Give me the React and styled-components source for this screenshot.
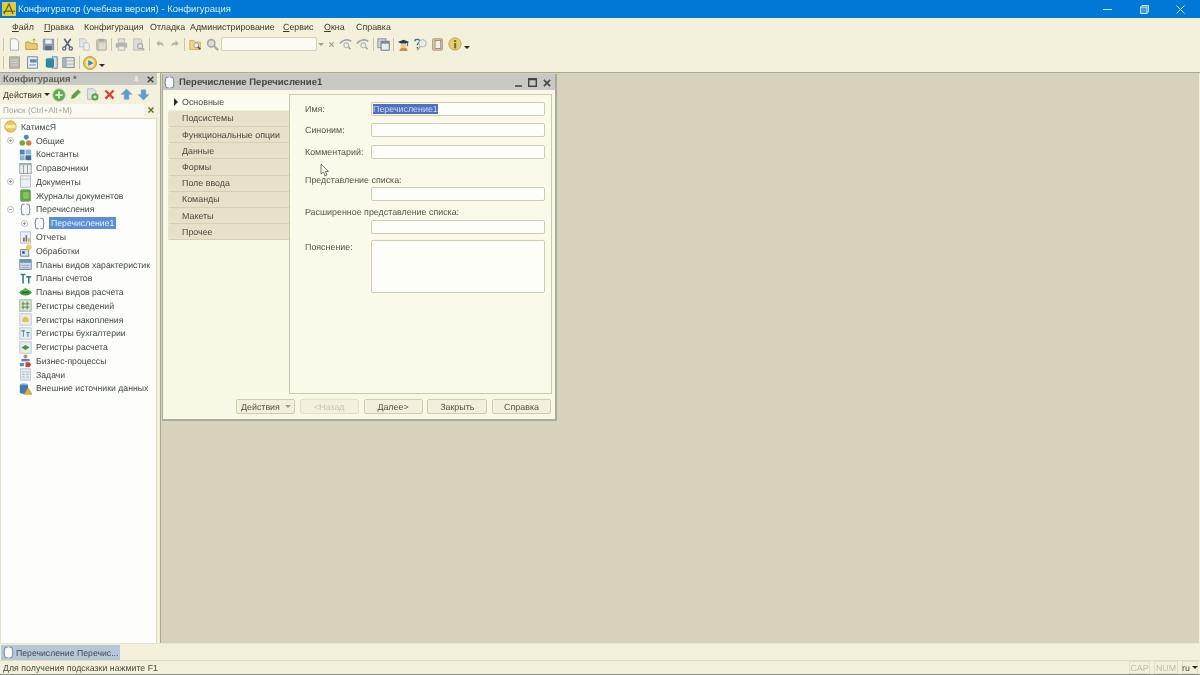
import React from 'react';
import styled, { createGlobalStyle } from 'styled-components';

const GlobalStyle = createGlobalStyle`
  html, body { margin: 0; padding: 0; height: 100%; overflow: hidden; }
  body {
    font-family: "Liberation Sans", Arial, sans-serif;
    font-size: 8.9px;
    color: #3c3a2c;
    text-rendering: geometricPrecision;
  }
  svg { flex: none; }
`;

const Screen = styled.div`
  width: 1200px;
  height: 675px;
  display: flex;
  flex-direction: column;
  background: #f3f0db;
  position: relative;
  overflow: hidden;
  filter: blur(0.3px);
`;

const TitleBar = styled.div`
  height: 18px;
  flex: none;
  background: #0078d7;
  display: flex;
  align-items: center;
  padding-left: 2px;
  color: #d8ecfb;
  font-size: 9.5px;
`;
const TitleText = styled.span` margin-left: 2px; flex: 1; `;
const WinButtons = styled.div`
  display: flex;
  gap: 27.5px;
  padding-right: 15px;
  align-items: center;
`;

const MenuBar = styled.div`
  height: 17px;
  flex: none;
  display: flex;
  align-items: center;
  padding-left: 12px;
`;
const MenuItem = styled.span`
  width: ${p => p.$w}px;
  flex: none;
  white-space: nowrap;
  u { text-underline-offset: 1px; }
`;

const ToolBar = styled.div`
  height: ${p => p.$h ?? 18}px;
  flex: none;
  display: flex;
  align-items: center;
  padding-left: 3px;
`;
const Sep = styled.div`
  width: 1px;
  height: 13px;
  background: #c9c6ae;
  margin: 0 ${p => p.$r ?? 1}px 0 ${p => p.$l ?? 1}px;
  flex: none;
`;
const Tool = styled.span`
  width: ${p => p.$w ?? 17}px;
  height: 16px;
  display: inline-flex;
  align-items: center;
  justify-content: center;
  flex: none;
`;
const SearchCombo = styled.div`
  width: 94px;
  height: 12px;
  flex: none;
  background: #fbfaf0;
  border: 1px solid #d3d0b8;
  border-radius: 2px;
`;
const Caret = styled.i`
  display: block;
  width: 0;
  height: 0;
  border-left: 3px solid transparent;
  border-right: 3px solid transparent;
  border-top: 3px solid ${p => p.$c ?? '#2c2a20'};
`;
const LowCaret = styled(Caret)`
  margin-top: 6px;
`;

const Main = styled.div`
  flex: 1;
  min-height: 0;
  display: flex;
  border-top: 1px solid #a8a698;
  padding-right: 1px;
`;

const SidePanel = styled.div`
  width: 157px;
  flex: none;
  display: flex;
  flex-direction: column;
  margin-right: 3px;
`;
const PanelHead = styled.div`
  height: 12px;
  flex: none;
  background: #c8c8c4;
  display: flex;
  align-items: center;
  padding: 0 2px 0 3px;
  font-weight: 700;
  font-size: 9.3px;
  color: #66665c;
  justify-content: space-between;
`;
const HeadIcons = styled.span`
  display: flex;
  align-items: center;
  gap: 5px;
`;
const ActionBar = styled.div`
  height: 18px;
  flex: none;
  display: flex;
  align-items: center;
  padding-left: 3px;
  padding-top: 1px;
  box-sizing: border-box;
`;
const ActionLabel = styled.span`
  width: 47px;
  flex: none;
  display: flex;
  align-items: center;
  gap: 2px;
`;
const SearchRow = styled.div`
  height: 14px;
  flex: none;
  display: flex;
  align-items: center;
  margin-bottom: 1px;
`;
const SearchBox = styled.div`
  width: 144px;
  height: 13px;
  flex: none;
  background: #fbfaf2;
  color: #a4a49c;
  font-size: 8.2px;
  padding-left: 3px;
  box-sizing: border-box;
  line-height: 13px;
`;
const SearchClear = styled.span`
  flex: 1;
  display: flex;
  justify-content: center;
  align-items: center;
`;
const Tree = styled.div`
  flex: 1;
  background: #fdfdfb;
  border-left: 1px solid #e4e1cc;
  border-top: 1px solid #dedbc4;
  border-right: 1px solid #dedbc4;
  padding: 1px 0 0 1px;
`;
const TreeRow = styled.div`
  height: 13.78px;
  display: flex;
  align-items: center;
  padding-left: ${p => p.$indent ?? 0}px;
  white-space: nowrap;
  font-size: 8.7px;
  color: #3f4a44;
`;
const Expander = styled.span`
  width: 7px;
  height: 7px;
  box-sizing: border-box;
  border: 1px solid #bcbcbc;
  border-radius: 50%;
  margin: 0 5px 0 2px;
  flex: none;
  position: relative;
  visibility: ${p => (p.$kind ? 'visible' : 'hidden')};
  &::before {
    content: '';
    position: absolute;
    left: 1px; right: 1px; top: 2px;
    height: 1px;
    background: #9a9a9a;
  }
  &::after {
    content: '';
    display: ${p => (p.$kind === 'plus' ? 'block' : 'none')};
    position: absolute;
    top: 1px; bottom: 1px; left: 2px;
    width: 1px;
    background: #9a9a9a;
  }
`;
const TreeIcon = styled.span`
  width: 12px;
  height: 12px;
  flex: none;
  display: inline-flex;
  align-items: center;
  justify-content: center;
  margin-right: ${p => p.$gap ?? 5}px;
`;
const TreeText = styled.span`
  ${p => p.$selected && `
    background: #5a8fd8;
    color: #e6eefa;
    padding: 0 2px;
    margin-left: -1px;
    line-height: 12px;
  `}
`;

const Desktop = styled.div`
  flex: 1;
  background: #d6d2bc;
  border-left: 1px solid #a8a698;
  padding: 1px 0 0 1px;
`;

const FormWindow = styled.div`
  width: 395px;
  height: 347px;
  box-sizing: border-box;
  background: #c8c8c4;
  border: 1px solid #aaa99d;
  border-width: 0 2px 2px 1px;
  display: flex;
  flex-direction: column;
`;
const WinHead = styled.div`
  height: 15px;
  flex: none;
  display: flex;
  align-items: center;
  padding: 1px 3px 0 0;
  font-weight: 700;
  color: #46463e;
  font-size: 9.5px;
`;
const WinTitle = styled.span` flex: 1; margin-left: 3px; `;
const WinCtl = styled.span`
  display: flex;
  align-items: center;
  gap: 5px;
`;
const WinBody = styled.div`
  flex: 1;
  background: #f9f7e6;
  display: flex;
  flex-direction: column;
  padding: 4px 3px 0 5px;
  min-height: 0;
`;
const TabsArea = styled.div`
  flex: 1;
  display: flex;
  min-height: 0;
`;
const Tabs = styled.div`
  width: 121px;
  flex: none;
  padding-top: 1px;
  display: flex;
  flex-direction: column;
`;
const Tab = styled.div`
  height: ${p => (p.$active ? 15.8 : 16.2)}px;
  flex: none;
  box-sizing: border-box;
  display: flex;
  align-items: center;
  padding-left: ${p => (p.$active ? 6 : 14)}px;
  border-radius: 2px 0 0 2px;
  background: ${p => (p.$active ? '#fdfcf1' : '#e5e2c9')};
  border-bottom: 1px solid ${p => (p.$active ? '#f3f0db' : '#d3d0b6')};
  color: #4c4a3c;
  gap: 4px;
  width: ${p => (p.$active ? 122 : 121)}px;
  white-space: nowrap;
`;
const Arrow = styled.i`
  width: 0;
  height: 0;
  border-top: 4px solid transparent;
  border-bottom: 4px solid transparent;
  border-left: 4px solid #2e2c22;
`;
const FormPanel = styled.div`
  flex: 1;
  background: #fbf9ea;
  border: 1px solid #cbc8ae;
  padding: 7px 6px 0 15px;
  display: grid;
  grid-template-columns: 66px 174px;
  grid-auto-rows: min-content;
  align-content: start;
  color: #56544a;
  box-sizing: border-box;
`;
const FieldLabel = styled.div`
  grid-column: 1;
  height: 15px;
  line-height: 14px;
  white-space: nowrap;
  margin-bottom: ${p => p.$mb ?? 0}px;
`;
const Caption = styled.div`
  grid-column: 1 / span 2;
  height: ${p => p.$h ?? 14}px;
  line-height: ${p => (p.$h ?? 14) + 1}px;
  margin-top: ${p => p.$mt ?? 0}px;
  white-space: nowrap;
`;
const Field = styled.div`
  grid-column: 2;
  height: ${p => p.$h ?? 14}px;
  box-sizing: border-box;
  background: #fefef9;
  border: 1px solid #cfccb4;
  border-radius: 2px;
  margin-bottom: ${p => p.$mb ?? 0}px;
  padding: 1px 0 0 1px;
  line-height: 10px;
`;
const Selected = styled.span`
  display: inline-block;
  background: #4f6fc0;
  color: #cfdaf2;
  line-height: 10px;
  height: 10px;
`;
const ButtonRow = styled.div`
  height: 25px;
  flex: none;
  display: flex;
  align-items: center;
  justify-content: flex-end;
  gap: 4.75px;
  padding-right: 1px;
`;
const Btn = styled.div`
  width: ${p => p.$w ?? 59}px;
  height: 15px;
  box-sizing: border-box;
  border: 1px solid ${p => (p.$off ? '#e2dfca' : '#cfccb4')};
  border-radius: 2px;
  background: ${p => (p.$off ? '#f3f1de' : '#f2efda')};
  color: ${p => (p.$off ? '#c8c6b4' : '#55534a')};
  display: flex;
  align-items: center;
  justify-content: ${p => (p.$menu ? 'space-between' : 'center')};
  padding: ${p => (p.$menu ? '0 3px 0 4px' : '0')};
  flex: none;
`;

const TaskBar = styled.div`
  height: 17px;
  flex: none;
  padding: 1px 0 0 1px;
  border-top: 1px solid #e8e5cf;
  box-sizing: border-box;
`;
const TaskTab = styled.div`
  width: 119px;
  height: 15px;
  background: #b7c7da;
  display: flex;
  align-items: center;
  padding-left: 1px;
  box-sizing: border-box;
  gap: 1px;
  color: #3d4a52;
  font-size: 8.7px;
  white-space: nowrap;
`;
const StatusBar = styled.div`
  height: 15px;
  flex: none;
  display: flex;
  align-items: center;
  padding-left: 3px;
  border-top: 1px solid #e0ddc6;
  border-bottom: 1px solid #8f8d80;
  box-sizing: border-box;
  font-size: 8.8px;
  color: #4c4a3c;
`;
const StatusText = styled.span` flex: 1; `;
const StatusCell = styled.span`
  width: ${p => p.$w}px;
  height: 13px;
  box-sizing: border-box;
  border: 1px solid #e2dfc9;
  color: ${p => p.$c ?? '#bdbba6'};
  display: flex;
  align-items: center;
  justify-content: center;
  gap: 2px;
  margin-right: ${p => p.$mr ?? 4}px;
`;
const Pointer = styled.svg`
  position: absolute;
  left: 320px;
  top: 163px;
`;

const Ico = ({ children, s = 13, v = 16 }) => (
  <svg width={s} height={s} viewBox={`0 0 ${v} ${v}`}>{children}</svg>
);

// набор маленьких иконок
const icons = {
  page: <path d="M3 1h7l3 3v11H3z" fill="#f8f8f4" stroke="#9aa4ae" />,
  open: <><path d="M1 5h5l1 2h8v7H1z" fill="#eccb72" stroke="#b08c3c" /><path d="M11 1v5M9 3l2-2 2 2" stroke="#c08c30" fill="none" /></>,
  save: <><rect x="1" y="1" width="14" height="14" rx="1" fill="#8c9cae" /><rect x="4" y="2" width="8" height="5" fill="#eef0f2" /><rect x="4" y="10" width="8" height="5" fill="#5c6c80" /></>,
  cut: <><path d="M4 1l7 10M12 1L5 11" stroke="#55647a" strokeWidth="2" fill="none" /><circle cx="4" cy="13" r="2" fill="none" stroke="#55647a" strokeWidth="1.5" /><circle cx="12" cy="13" r="2" fill="none" stroke="#55647a" strokeWidth="1.5" /></>,
  copy: <><path d="M2 1h6l2 2v8H2z" fill="#e4e6e8" stroke="#b8bec6" /><path d="M7 6h5l2 2v7H7z" fill="#eceef0" stroke="#b8bec6" /></>,
  paste: <><rect x="2" y="2" width="12" height="13" rx="1" fill="#c8c4b0" stroke="#b0ac98" /><rect x="5" y="1" width="6" height="3" fill="#a8a898" /><rect x="5" y="6" width="8" height="8" fill="#dcdcd4" /></>,
  print: <><rect x="4" y="1" width="8" height="5" fill="#e0e0da" stroke="#b4b4ac" /><rect x="1" y="6" width="14" height="6" rx="1" fill="#b4b4ac" /><rect x="4" y="10" width="8" height="5" fill="#e8e8e2" stroke="#b4b4ac" /></>,
  preview: <><path d="M2 1h8l2 2v12H2z" fill="#dcdcd8" stroke="#b8b8b0" /><circle cx="10" cy="10" r="3" fill="#e8e8e4" stroke="#a8a8a0" strokeWidth="1.4" /><path d="M12 12l3 3" stroke="#a8a8a0" strokeWidth="2" /></>,
  undo: <path d="M2 7l5-5v3c4 0 7 2 7 7-2-3-4-3-7-3v3z" fill="#b4b4ac" />,
  redo: <path d="M14 7L9 2v3C5 5 2 7 2 12c2-3 4-3 7-3v3z" fill="#b4b4ac" />,
  find: <><path d="M1 3h5l1 2h7v9H1z" fill="#f0d68c" stroke="#c8a858" /><circle cx="9" cy="9" r="3" fill="#f4f4ee" stroke="#8090a0" /><path d="M11 11l3 3" stroke="#705030" strokeWidth="2" /></>,
  search: <><circle cx="6.5" cy="6.5" r="4.5" fill="#dcdcd8" stroke="#a8a8a4" strokeWidth="2" /><path d="M10 10l5 5" stroke="#a8a8a4" strokeWidth="2.6" /></>,
  back: <><path d="M1 7c3-5 10-6 14-3" fill="none" stroke="#9ca4a8" strokeWidth="2" /><circle cx="9" cy="9" r="3" fill="none" stroke="#b4b8ba" strokeWidth="1.4" /><path d="M12 11l2 3" stroke="#9ca4a8" strokeWidth="2" /></>,
  windows: <><rect x="1" y="1" width="10" height="11" fill="#cdd4dc" stroke="#7a8694" /><rect x="5" y="4" width="10" height="11" fill="#e8ecf0" stroke="#54606e" /><rect x="5" y="4" width="10" height="3" fill="#7a8a9c" /></>,
  scholar: <><path d="M1 5l7-3 7 3-7 3z" fill="#243c5c" /><circle cx="8" cy="10" r="3.4" fill="#f0c890" /><path d="M3 16c0-3 2-4 5-4s5 1 5 4z" fill="#c89048" /><path d="M13 5v5" stroke="#243c5c" /></>,
  help: <><path d="M1 4c0-3 6-3 6 0 0 2-3 2-3 5M4 11v2" fill="none" stroke="#3a6c98" strokeWidth="1.6" /><circle cx="10.5" cy="6.5" r="4.5" fill="#e6eef2" stroke="#a8a898" /><path d="M7 11l-3 4" stroke="#b8a078" strokeWidth="2" /></>,
  book: <><rect x="2" y="1" width="12" height="14" rx="1" fill="#e4c89c" stroke="#b08858" /><rect x="5" y="3" width="7" height="10" fill="#f4eee0" stroke="#7088a8" /></>,
  info: <><circle cx="8" cy="8" r="7" fill="#eccb72" stroke="#b89c58" /><rect x="7" y="7" width="2.4" height="6" fill="#5c7c28" /><rect x="7" y="3.4" width="2.4" height="2.4" fill="#5c7c28" /></>,
  grey1: <><rect x="2" y="1" width="12" height="14" fill="#b8b8ae" stroke="#9c9c92" /><path d="M4 5h8M4 8h8M4 11h8" stroke="#dcdcd2" /></>,
  tree2: <><rect x="2" y="1" width="12" height="14" fill="#e8eef2" stroke="#64748a" /><rect x="5" y="4" width="8" height="4" fill="#5e8cb0" /><path d="M4 11h8" stroke="#64748a" /></>,
  db: <><rect x="9" y="1" width="6" height="14" fill="#d8dee4" stroke="#64748a" /><ellipse cx="6" cy="4" rx="5" ry="2" fill="#4ea8b8" /><path d="M1 4v9c0 2 10 2 10 0V4" fill="#2f86a2" /></>,
  table: <><rect x="1" y="2" width="14" height="12" fill="#e8e8de" stroke="#6c7c8c" /><rect x="1" y="2" width="5" height="12" fill="#a8b4bc" /><path d="M6 6h9M6 10h9" stroke="#a8a89c" /></>,
  play: <><circle cx="8" cy="8" r="7.4" fill="#eec04c" stroke="#b49448" /><circle cx="8" cy="8" r="5.2" fill="#f6e6a8" /><path d="M6 4.5l6 3.5-6 3.500z" fill="#3c84c4" /></>,
  dot: <><circle cx="8" cy="8" r="7" fill="#ecc84c" stroke="#b8a060" /><rect x="2" y="6" width="12" height="4" fill="#f8ecb0" /></>,
  common: <><circle cx="9" cy="4" r="3" fill="#3c90b4" /><circle cx="4" cy="11" r="3.4" fill="#6ca63c" /><circle cx="12" cy="11" r="3.4" fill="#d08038" /></>,
  consts: <><rect x="1" y="2" width="6" height="6" fill="#4c88b8" /><rect x="8" y="2" width="7" height="6" fill="#8cb4d0" /><rect x="1" y="9" width="6" height="6" fill="#8cb4d0" /><rect x="8" y="9" width="7" height="6" fill="#3c6c98" /></>,
  refs: <><rect x="1" y="2" width="14" height="12" fill="#f0f0e8" stroke="#808c98" /><path d="M5.5 2v12M10.5 2v12" stroke="#808c98" /><rect x="1" y="2" width="14" height="2" fill="#a8b4bc" /></>,
  docs: <><rect x="2" y="1" width="12" height="14" fill="#eef0f4" stroke="#a4b0bc" /><path d="M2 5h12" stroke="#b8c4d0" /></>,
  journal: <><rect x="2" y="1" width="12" height="14" rx="1" fill="#5ca83c" stroke="#7a9870" /><rect x="5" y="4" width="7" height="8" fill="#88c464" /></>,
  enum: <><rect x="3" y="1.500" width="10" height="13" rx="2.500" fill="#f6f8fa" /><path d="M7 1.500H5.500C3.500 1.500 3 3 3 5v1.500C3 8 1.800 8 1.800 8S3 8 3 9.500V11c0 2 .5 3.500 2.500 3.500H7M9 1.500h1.500c2 0 2.500 1.500 2.500 3.500v1.500C13 8 14.200 8 14.200 8S13 8 13 9.500V11c0 2-.5 3.500-2.500 3.500H9" fill="none" stroke="#84909a" strokeWidth="1.300" /></>,
  report: <><rect x="2" y="1" width="12" height="14" fill="#eef0f4" stroke="#a8b4c0" /><rect x="5" y="8" width="2" height="5" fill="#c04830" /><rect x="8" y="5" width="2" height="8" fill="#4c88b8" /><rect x="11" y="9" width="2" height="4" fill="#d8a030" /></>,
  process: <><rect x="2" y="7" width="10" height="8" fill="#dce4ec" stroke="#54708c" /><rect x="4" y="9" width="3" height="3" fill="#24506c" /><circle cx="12" cy="4" r="3.4" fill="#f0cc50" /></>,
  charts: <><rect x="1" y="2" width="14" height="12" fill="#d4dee8" stroke="#5c7c9c" /><rect x="1" y="2" width="14" height="4" fill="#6c94b8" /><path d="M3 9h10M3 12h10" stroke="#7c94ac" /></>,
  accounts: <path d="M2 2h6v2H6v10H4V4H2zM9 5h6v2h-2v7h-2V7H9z" fill="#3c7ca4" />,
  calc: <><ellipse cx="8" cy="8" rx="7.4" ry="3.6" fill="#3c9c3c" /><path d="M3 6l5-4 5 4z" fill="#5cb43c" /><path d="M4 8h8" stroke="#1c6c1c" strokeWidth="1.4" /></>,
  regInfo: <><rect x="1" y="1" width="14" height="14" fill="#dfe8d8" stroke="#98a890" /><path d="M5 3v10M10 3v10M3 6h10M3 10h10" stroke="#5c8c4c" strokeWidth="1.2" /></>,
  regAcc: <><rect x="1" y="1" width="14" height="14" fill="#e8eef4" stroke="#b4bec8" /><path d="M4 7l4-3 4 3v4H4z" fill="#e8c040" /></>,
  regBook: <><rect x="1" y="1" width="14" height="14" fill="#e4ecf4" stroke="#b4bec8" /><path d="M3 4h4v1.400H6V12H5V5.400H3zM9 6h4v1.400h-1.400V12h-1.200V7.400H9z" fill="#3c7ca4" /></>,
  regCalc: <><rect x="1" y="1" width="14" height="14" fill="#e8eef0" stroke="#b4bec8" /><path d="M3 8l5-3 5 3-5 3z" fill="#3c9c3c" /></>,
  biz: <><circle cx="8" cy="3" r="2.4" fill="#d88848" /><rect x="3" y="6" width="10" height="3" fill="#4c88c0" /><rect x="1" y="11" width="5" height="4" fill="#5c88b4" /><path d="M8 10l5 0 2 3-2 3h-5z" fill="#d04030" /></>,
  task: <><rect x="2" y="1" width="12" height="14" fill="#e4e8f0" stroke="#b8c0cc" /><path d="M4 5h3M4 8h3M4 11h3M9 5h3M9 8h3M9 11h3" stroke="#9cb0c8" /></>,
  ext: <><ellipse cx="6" cy="4" rx="5" ry="2.400" fill="#7cb0d8" /><path d="M1 4v9c0 2 10 2 10 0V4" fill="#3c7cb0" /><path d="M11 7l5 8H6z" fill="#e8b030" stroke="#a07818" strokeWidth="0.6" /></>,
  add: <><circle cx="8" cy="8" r="7" fill="#58b048" stroke="#a4b898" /><path d="M4 8h8M8 4v8" stroke="#e8f4e0" strokeWidth="2" /></>,
  pencil: <path d="M3 13l1-4 7-7 3 3-7 7z" fill="#58a838" stroke="#3c7c28" strokeWidth="0.6" />,
  addCopy: <><path d="M2 1h7l3 3v10H2z" fill="#dfe6ea" stroke="#a8b0b8" /><circle cx="11" cy="11" r="4.4" fill="#58a848" /><path d="M9 11h4M11 9v4" stroke="#fff" strokeWidth="1.2" /></>,
  del: <path d="M2 4l2-2 4 4 4-4 2 2-4 4 4 4-2 2-4-4-4 4-2-2 4-4z" fill="#d8403c" />,
  up: <path d="M8 1l7 7h-4v6H5V8H1z" fill="#5c9cd4" stroke="#a4b4c0" strokeWidth="0.6" />,
  down: <path d="M8 15l7-7h-4V2H5v6H1z" fill="#5c9cd4" stroke="#a4b4c0" strokeWidth="0.6" />,
  x: <path d="M3 3l10 10M13 3L3 13" stroke="#4a4a40" strokeWidth="2.800" fill="none" />,
  xGrey: <path d="M4 4l8 8M12 4l-8 8" stroke="#a4a49c" strokeWidth="2" fill="none" />,
  xOlive: <path d="M3 3l10 10M13 3L3 13" stroke="#6c6428" strokeWidth="2.800" fill="none" />,
  pin: <path d="M6 2h4v6l2 2H4l2-2zM8 10v4" fill="#e4e4de" stroke="#e8e8e2" />,
};
const I = ({ n, s }) => <Ico s={s}>{icons[n]}</Ico>;

const menuItems = [
  { t: 'Файл', u: 'Ф', w: 32 }, { t: 'Правка', u: 'П', w: 40 }, { t: 'Конфигурация', w: 66 },
  { t: 'Отладка', w: 40 }, { t: 'Администрирование', w: 93 }, { t: 'Сервис', u: 'С', w: 41 },
  { t: 'Окна', u: 'О', w: 32 }, { t: 'Справка', w: 40 },
];

const treeItems = [
  { icon: 'common', text: 'Общие', exp: 'plus' },
  { icon: 'consts', text: 'Константы' },
  { icon: 'refs', text: 'Справочники' },
  { icon: 'docs', text: 'Документы', exp: 'plus' },
  { icon: 'journal', text: 'Журналы документов' },
  { icon: 'enum', text: 'Перечисления', exp: 'minus' },
  { icon: 'enum', text: 'Перечисление1', exp: 'plus', child: true },
  { icon: 'report', text: 'Отчеты' },
  { icon: 'process', text: 'Обработки' },
  { icon: 'charts', text: 'Планы видов характеристик' },
  { icon: 'accounts', text: 'Планы счетов' },
  { icon: 'calc', text: 'Планы видов расчета' },
  { icon: 'regInfo', text: 'Регистры сведений' },
  { icon: 'regAcc', text: 'Регистры накопления' },
  { icon: 'regBook', text: 'Регистры бухгалтерии' },
  { icon: 'regCalc', text: 'Регистры расчета' },
  { icon: 'biz', text: 'Бизнес-процессы' },
  { icon: 'task', text: 'Задачи' },
  { icon: 'ext', text: 'Внешние источники данных' },
];

const tabs = ['Подсистемы', 'Функциональные опции', 'Данные', 'Формы', 'Поле ввода', 'Команды', 'Макеты', 'Прочее'];

const App = () => (
  <Screen>
    <GlobalStyle />
    <TitleBar>
      <svg width="14" height="14" viewBox="0 0 14 14">
        <rect width="14" height="14" fill="#e8c83c" />
        <path d="M2 12L7 2l4 10M1 10c4-2 8 0 12-1" fill="none" stroke="#4c6c24" strokeWidth="1.2" />
      </svg>
      <TitleText>Конфигуратор (учебная версия) - Конфигурация</TitleText>
      <WinButtons>
        <svg width="9" height="9" viewBox="0 0 9 9"><path d="M0 4.500h9" stroke="#cfe6f8" /></svg>
        <svg width="9" height="9" viewBox="0 0 9 9"><rect x="0.500" y="2" width="6.500" height="6.500" fill="#3f9ce2" stroke="#cfe6f8" /><path d="M2 2V.5h6.500V7H7" fill="none" stroke="#cfe6f8" /></svg>
        <svg width="9" height="9" viewBox="0 0 9 9"><path d="M.5.5l8 8M8.500.5l-8 8" stroke="#cfe6f8" /></svg>
      </WinButtons>
    </TitleBar>

    <MenuBar>
      {menuItems.map(m => (
        <MenuItem key={m.t} $w={m.w}>
          {m.u ? <><u>{m.u}</u>{m.t.slice(1)}</> : m.t}
        </MenuItem>
      ))}
    </MenuBar>

    <ToolBar>
      <Sep $l={0} $r={2} />
      <Tool><I n="page" /></Tool><Tool><I n="open" /></Tool><Tool><I n="save" /></Tool>
      <Sep $l={0} $r={1} />
      <Tool><I n="cut" /></Tool><Tool><I n="copy" /></Tool><Tool><I n="paste" /></Tool>
      <Sep $l={1} $r={1} />
      <Tool><I n="print" /></Tool><Tool><I n="preview" /></Tool>
      <Sep $l={2} $r={2} />
      <Tool $w={15}><I n="undo" s={10} /></Tool><Tool $w={15}><I n="redo" s={10} /></Tool>
      <Sep $l={2} $r={2} />
      <Tool><I n="find" /></Tool><Tool><I n="search" /></Tool>
      <SearchCombo />
      <Tool $w={8}><Caret $c="#a0a090" /></Tool>
      <Tool $w={12}><I n="xGrey" s={9} /></Tool>
      <Tool><I n="back" /></Tool><Tool><I n="back" /></Tool>
      <Sep $l={2} $r={1} />
      <Tool><I n="windows" /></Tool>
      <Sep $l={1} $r={1} />
      <Tool><I n="scholar" /></Tool><Tool><I n="help" /></Tool><Tool><I n="book" /></Tool>
      <Tool><I n="info" s={14} /></Tool>
      <Tool $w={8}><LowCaret /></Tool>
    </ToolBar>

    <ToolBar $h={19}>
      <Sep $l={0} $r={2} />
      <Tool><I n="grey1" /></Tool><Tool $w={19}><I n="tree2" /></Tool><Tool $w={18}><I n="db" /></Tool><Tool><I n="table" /></Tool>
      <Sep $l={2} $r={1} />
      <Tool><I n="play" s={14} /></Tool>
      <Tool $w={8}><LowCaret /></Tool>
    </ToolBar>

    <Main>
      <SidePanel>
        <PanelHead>
          Конфигурация *
          <HeadIcons><I n="pin" s={9} /><I n="x" s={9} /></HeadIcons>
        </PanelHead>
        <ActionBar>
          <ActionLabel>Действия <Caret /></ActionLabel>
          <Tool><I n="add" s={14} /></Tool>
          <Tool><I n="pencil" /></Tool>
          <Tool><I n="addCopy" /></Tool>
          <Tool><I n="del" /></Tool>
          <Tool><I n="up" /></Tool>
          <Tool><I n="down" /></Tool>
        </ActionBar>
        <SearchRow>
          <SearchBox>Поиск (Ctrl+Alt+M)</SearchBox>
          <SearchClear><I n="xOlive" s={8} /></SearchClear>
        </SearchRow>
        <Tree>
          <TreeRow $indent={2}>
            <TreeIcon $gap={5}><I n="dot" /></TreeIcon>
            <TreeText>КатимсЯ</TreeText>
          </TreeRow>
          {treeItems.map(it => (
            <TreeRow key={it.text} $indent={it.child ? 17 : 3}>
              <Expander $kind={it.exp} />
              <TreeIcon><I n={it.icon} /></TreeIcon>
              <TreeText $selected={it.child}>{it.text}</TreeText>
            </TreeRow>
          ))}
        </Tree>
      </SidePanel>

      <Desktop>
        <FormWindow>
          <WinHead>
            <I n="enum" />
            <WinTitle>Перечисление Перечисление1</WinTitle>
            <WinCtl>
              <svg width="8" height="9" viewBox="0 0 8 9"><path d="M0 8h7" stroke="#44443c" strokeWidth="1.500" /></svg>
              <svg width="9" height="9" viewBox="0 0 9 9"><rect x=".7" y=".7" width="7.600" height="7.600" fill="none" stroke="#44443c" strokeWidth="1.400" /><path d="M0 1.500h9" stroke="#44443c" strokeWidth="1.500" /></svg>
              <I n="x" s={10} />
            </WinCtl>
          </WinHead>
          <WinBody>
            <TabsArea>
              <Tabs>
                <Tab $active><Arrow />Основные</Tab>
                {tabs.map(t => <Tab key={t}>{t}</Tab>)}
              </Tabs>
              <FormPanel>
                <FieldLabel $mb={6}>Имя:</FieldLabel>
                <Field $mb={6}><Selected>Перечисление1</Selected></Field>
                <FieldLabel $mb={7}>Синоним:</FieldLabel>
                <Field $mb={7} />
                <FieldLabel>Комментарий:</FieldLabel>
                <Field />
                <Caption $mt={13}>Представление списка:</Caption>
                <Field $mb={3} />
                <Caption $h={16}>Расширенное представление списка:</Caption>
                <Field $mb={6} />
                <FieldLabel>Пояснение:</FieldLabel>
                <Field $h={53} />
              </FormPanel>
            </TabsArea>
            <ButtonRow>
              <Btn $menu>Действия <Caret $c="#9a9888" /></Btn>
              <Btn $off>&lt;Назад</Btn>
              <Btn>Далее&gt;</Btn>
              <Btn $w={60}>Закрыть</Btn>
              <Btn>Справка</Btn>
            </ButtonRow>
          </WinBody>
        </FormWindow>
      </Desktop>
    </Main>

    <TaskBar>
      <TaskTab><I n="enum" />Перечисление Перечис...</TaskTab>
    </TaskBar>
    <StatusBar>
      <StatusText>Для получения подсказки нажмите F1</StatusText>
      <StatusCell $w={21}>CAP</StatusCell>
      <StatusCell $w={24}>NUM</StatusCell>
      <StatusCell $w={16} $mr={2} $c="#55534a">ru <Caret /></StatusCell>
    </StatusBar>

    <Pointer width="9" height="14" viewBox="0 0 9 14">
      <path d="M1 1v10l2.500-2 1.500 4 2-1-1.500-3.500H8.500z" fill="#f4f4f0" stroke="#5c5c58" strokeWidth="0.800" />
    </Pointer>
  </Screen>
);

export default App;
